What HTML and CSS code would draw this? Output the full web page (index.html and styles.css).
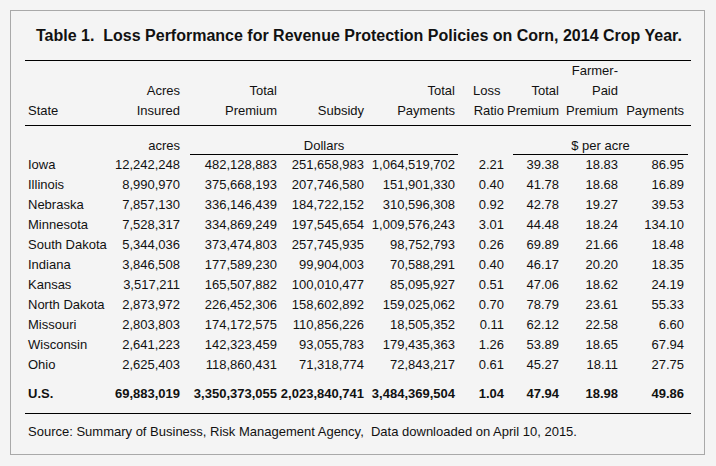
FILE: index.html
```html
<!DOCTYPE html>
<html>
<head>
<meta charset="utf-8">
<link rel="stylesheet" href="styles.css">
</head>
<body>
<div class="panel">
  <h1 class="title">Table 1.&nbsp; Loss Performance for Revenue Protection Policies on Corn, 2014 Crop Year.</h1>
  <table class="data">
    <colgroup>
      <col class="c1"><col class="c2"><col class="c3"><col class="c4"><col class="c5"><col class="c6"><col class="c7"><col class="c8"><col class="c9">
    </colgroup>
    <thead>
      <tr class="h1">
        <th></th><th></th><th></th><th></th><th></th><th></th><th></th><th class="num">Farmer-</th><th class="last"></th>
      </tr>
      <tr class="h2">
        <th></th><th class="num">Acres</th><th class="num">Total</th><th></th><th class="num">Total</th><th class="loss">Loss</th><th class="num">Total</th><th class="num">Paid</th><th class="last"></th>
      </tr>
      <tr class="h3">
        <th class="state">State</th><th class="num">Insured</th><th class="num">Premium</th><th class="num">Subsidy</th><th class="num">Payments</th><th class="num">Ratio</th><th class="num">Premium</th><th class="num">Premium</th><th class="num last">Payments</th>
      </tr>
    </thead>
    <tbody>
      <tr class="units">
        <td></td>
        <td class="num"><div class="unit">acres</div></td>
        <td colspan="3" class="dollars"><div class="unit ruled">Dollars</div></td>
        <td></td>
        <td colspan="3" class="peracre"><div class="unit ruled">$ per acre</div></td>
      </tr>
      <tr><td class="state">Iowa</td><td class="num">12,242,248</td><td class="num">482,128,883</td><td class="num">251,658,983</td><td class="num">1,064,519,702</td><td class="num">2.21</td><td class="num">39.38</td><td class="num">18.83</td><td class="num last">86.95</td></tr>
      <tr><td class="state">Illinois</td><td class="num">8,990,970</td><td class="num">375,668,193</td><td class="num">207,746,580</td><td class="num">151,901,330</td><td class="num">0.40</td><td class="num">41.78</td><td class="num">18.68</td><td class="num last">16.89</td></tr>
      <tr><td class="state">Nebraska</td><td class="num">7,857,130</td><td class="num">336,146,439</td><td class="num">184,722,152</td><td class="num">310,596,308</td><td class="num">0.92</td><td class="num">42.78</td><td class="num">19.27</td><td class="num last">39.53</td></tr>
      <tr><td class="state">Minnesota</td><td class="num">7,528,317</td><td class="num">334,869,249</td><td class="num">197,545,654</td><td class="num">1,009,576,243</td><td class="num">3.01</td><td class="num">44.48</td><td class="num">18.24</td><td class="num last">134.10</td></tr>
      <tr><td class="state">South Dakota</td><td class="num">5,344,036</td><td class="num">373,474,803</td><td class="num">257,745,935</td><td class="num">98,752,793</td><td class="num">0.26</td><td class="num">69.89</td><td class="num">21.66</td><td class="num last">18.48</td></tr>
      <tr><td class="state">Indiana</td><td class="num">3,846,508</td><td class="num">177,589,230</td><td class="num">99,904,003</td><td class="num">70,588,291</td><td class="num">0.40</td><td class="num">46.17</td><td class="num">20.20</td><td class="num last">18.35</td></tr>
      <tr><td class="state">Kansas</td><td class="num">3,517,211</td><td class="num">165,507,882</td><td class="num">100,010,477</td><td class="num">85,095,927</td><td class="num">0.51</td><td class="num">47.06</td><td class="num">18.62</td><td class="num last">24.19</td></tr>
      <tr><td class="state">North Dakota</td><td class="num">2,873,972</td><td class="num">226,452,306</td><td class="num">158,602,892</td><td class="num">159,025,062</td><td class="num">0.70</td><td class="num">78.79</td><td class="num">23.61</td><td class="num last">55.33</td></tr>
      <tr><td class="state">Missouri</td><td class="num">2,803,803</td><td class="num">174,172,575</td><td class="num">110,856,226</td><td class="num">18,505,352</td><td class="num">0.11</td><td class="num">62.12</td><td class="num">22.58</td><td class="num last">6.60</td></tr>
      <tr><td class="state">Wisconsin</td><td class="num">2,641,223</td><td class="num">142,323,459</td><td class="num">93,055,783</td><td class="num">179,435,363</td><td class="num">1.26</td><td class="num">53.89</td><td class="num">18.65</td><td class="num last">67.94</td></tr>
      <tr><td class="state">Ohio</td><td class="num">2,625,403</td><td class="num">118,860,431</td><td class="num">71,318,774</td><td class="num">72,843,217</td><td class="num">0.61</td><td class="num">45.27</td><td class="num">18.11</td><td class="num last">27.75</td></tr>
      <tr class="total"><td class="state">U.S.</td><td class="num">69,883,019</td><td class="num">3,350,373,055</td><td class="num">2,023,840,741</td><td class="num">3,484,369,504</td><td class="num">1.04</td><td class="num">47.94</td><td class="num">18.98</td><td class="num last">49.86</td></tr>
    </tbody>
  </table>
  <p class="source">Source: Summary of Business, Risk Management Agency,&nbsp; Data downloaded on April 10, 2015.</p>
</div>
</body>
</html>
```
FILE: styles.css
```css
html, body {
  margin: 0;
  padding: 0;
  background: #f4f4f4;
}
body {
  padding: 10px 0 0 10px;
  font-family: "Liberation Sans", Arial, sans-serif;
  color: #111;
}
.panel {
  width: 666px;
  height: 443px;
  border: 1px solid #a9a9a9;
  padding: 0 13px 0 14px;
  background: #f4f4f4;
}
.title {
  margin: 15px 0 14px 11px;
  font-size: 16px;
  line-height: 20px;
  font-weight: bold;
  white-space: nowrap;
}
.data {
  width: 666px;
  table-layout: fixed;
  border-collapse: collapse;
  font-size: 13px;
  line-height: 20px;
  border-top: 1px solid #000;
  border-bottom: 1px solid #000;
}
.c1 { width: 85px; }
.c2 { width: 70px; }
.c3 { width: 97px; }
.c4 { width: 87px; }
.c5 { width: 91px; }
.c6 { width: 49px; }
.c7 { width: 55px; }
.c8 { width: 59px; }
.c9 { width: 73px; }
.data th, .data td {
  padding: 0;
  font-weight: normal;
  white-space: nowrap;
  height: 20px;
}
.data .h1 th { height: 19px; }
.data .h3 th { padding-bottom: 4px; border-bottom: 1px solid #000; }
.data .num { text-align: right; }
.data .state { text-align: left; padding-left: 3px; }
.data .loss { text-align: left; padding-left: 18px; }
.data .last { padding-right: 7px; }
.units td { padding-top: 12px; height: auto; vertical-align: top; }
.unit {
  line-height: 16px;
  border-bottom: 1px solid transparent;
}
.unit.ruled {
  text-align: center;
  border-bottom-color: #000;
}
.dollars .unit { margin: 0 -3px 0 10px; }
.peracre .unit { margin: 0 3px 0 9px; }
.total td {
  font-weight: bold;
  padding-top: 9px;
  padding-bottom: 9px;
}
.source {
  margin: 8px 0 0 3px;
  font-size: 13px;
  line-height: 20px;
}
```
